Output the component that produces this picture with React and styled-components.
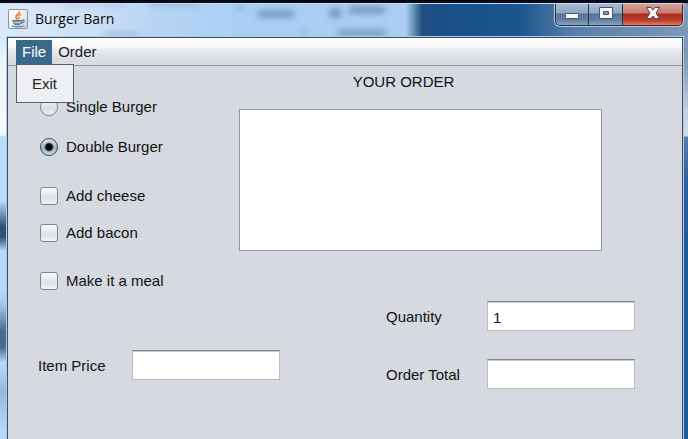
import React, { useState } from "react";
import styled, { createGlobalStyle, css } from "styled-components";

const GlobalStyle = createGlobalStyle`
  *, *::before, *::after { box-sizing: border-box; }
  body {
    margin: 0;
    background: #0b0d1c;
    font-family: "Liberation Sans", Arial, sans-serif;
    font-size: 15px;
    line-height: 20px;
    color: #111;
  }
  button, input, textarea { font: inherit; color: inherit; }
`;

const Frame = styled.div`
  position: relative;
  display: flex;
  flex-direction: column;
  min-height: 100vh;
  padding: 2px 5px 0 7px;
  border-top: 1px solid #05060f;
  background:
    linear-gradient(#0b0d1c, #0b0d1c) 0 0 / 100% 2px no-repeat,
    linear-gradient(180deg, #d3e7fa 0 34px, #eef6fd 60px, #f4f9fe 134px, #b9dcfb 136px 200px, #2b5378 225px 236px, #b5d9fa 250px 290px, #9dc4e6 305px, #476c91 330px 346px, #b3dafb 362px, #94b8dc 390px, #b3dafb 430px) 0 0 / 7px 100% no-repeat,
    linear-gradient(180deg, #7791b1 0, #819bb9 60px, #c3cedd 110px, #d3dce9 135px, #5a7ca8 136px, #2c629f 180px, #1b5a9c 260px) 100% 0 / 5px 100% no-repeat,
    #1b568f;
`;

const TitleBar = styled.header`
  position: relative;
  display: flex;
  align-items: flex-start;
  height: 34px;
  margin: 0 -5px 0 -7px;
  padding: 0 4px 0 8px;
  border-top: 1px solid #c9dbef;
  border-top-left-radius: 7px;
  border-top-right-radius: 7px;
  overflow: hidden;
  background: linear-gradient(90deg, #dce9f8 0, #cfe1f6 90px, #b8d5f3 150px, #a9cff4 240px, #abcef2 406px, #7ba5cb 411px, #22507d 422px, #194f88 438px, #1b568f 520px, #5a80aa 575px, #7591b3 660px, #7e98b7 100%);
`;

const Reflections = styled.svg`
  position: absolute;
  left: 0;
  top: 0;
  width: 430px;
  height: 34px;
  pointer-events: none;
`;

const Title = styled.h1`
  position: relative;
  flex: 1;
  margin: 5px 0 0 7px;
  font: 400 14px/20px "Open Sans", "Noto Sans", sans-serif;
  color: #080b12;
`;

const AppIcon = styled.svg`
  position: relative;
  width: 20px;
  height: 20px;
  margin-top: 5px;
`;

const WindowButtons = styled.div`
  position: relative;
  display: flex;
  margin-top: -2px;
  border: 1px solid #b4c6db;
  border-top: 0;
  border-radius: 0 0 6px 6px;
  overflow: hidden;
`;

const WindowButton = styled.button`
  display: grid;
  place-items: center;
  width: ${(p) => (p.$close ? 60 : 34)}px;
  height: 24px;
  padding: 0;
  border: 1px solid #22364f;
  border-top-color: #b9c8d9;
  border-left-width: ${(p) => (p.$first ? 1 : 0)}px;
  ${(p) =>
    p.$close
      ? css`
          border-color: #4a1e20;
          border-radius: 0 0 5px 0;
          background: linear-gradient(#d9a39b 0, #c67c70 10px, #ae2c1c 11px, #b83c28 17px, #dc8069 100%);
        `
      : css`
          border-radius: ${p.$first ? "0 0 0 5px" : "0"};
          background: linear-gradient(#a9bdd3 0, #8ea8c4 10px, #53749a 11px, #6481a5 17px, #87a3c1 100%);
        `}
`;

const Client = styled.main`
  position: relative;
  display: flex;
  flex: 1;
  flex-direction: column;
  border: 1px solid #354d68;
  border-bottom: 0;
  outline: 1px solid #b4cbe3;
  background: #d6d9e0;
`;

const MenuBar = styled.nav`
  display: flex;
  height: 28px;
  padding: 2px 8px;
  border-bottom: 1px solid #9297a1;
  background: linear-gradient(#fff 0, #f8f8fa 8px, #e6e8eb 13px, #d6d9de 24px, #dcdfe4 100%);
`;

const MenuGroup = styled.div`
  position: relative;
`;

const MenuButton = styled.button`
  height: 24px;
  padding: 0 6px;
  border: 0;
  background: ${(p) => (p.$open ? "#39698a" : "transparent")};
  color: ${(p) => (p.$open ? "#fff" : "#202020")};
`;

const MenuPopup = styled.div`
  position: absolute;
  z-index: 2;
  top: 24px;
  left: 0;
  padding: 6px 0;
  border: 1px solid #5a5d63;
  background: #edeff2;
`;

const MenuItem = styled.button`
  display: block;
  height: 25px;
  padding: 0 16px 0 15px;
  border: 0;
  background: transparent;
  color: #222;
`;

const Form = styled.form`
  display: grid;
  grid-template-columns: 272px 1fr;
  padding: 6px 47px 24px 30px;
`;

const OptionColumn = styled.div`
  display: flex;
  flex-direction: column;
  padding-top: 25px;
`;

const OptionGroup = styled.fieldset`
  display: flex;
  flex-direction: column;
  gap: ${(p) => p.$gap}px;
  margin: 0 0 ${(p) => p.$after}px;
  padding: 0 0 0 2px;
  border: 0;
`;

const Option = styled.label`
  display: flex;
  align-items: center;
  gap: 8px;
  height: 20px;
`;

const mark = css`
  appearance: none;
  width: 18px;
  height: 18px;
  margin: 0;
  border: 1px solid #7f8591;
`;

const RadioMark = styled.input.attrs({ type: "radio" })`
  ${mark}
  border-radius: 50%;
  background: linear-gradient(#fafafb, #d9dce1 60%, #f0f1f3);
  &:checked {
    border-color: #36495f;
    background:
      radial-gradient(circle, #08090c 0 3px, transparent 5px),
      linear-gradient(#dbe6f0, #9db4ca 55%, #c6d7e5);
  }
`;

const CheckMark = styled.input.attrs({ type: "checkbox" })`
  ${mark}
  border-radius: 3px;
  background: linear-gradient(#fafafb, #dee0e4 60%, #f1f2f4);
  &:checked {
    border-color: #36495f;
    background: linear-gradient(#dbe6f0, #8fa9c1 55%, #c6d7e5);
  }
`;

const OrderColumn = styled.div`
  display: flex;
  flex-direction: column;
`;

const OrderPanel = styled.section`
  display: flex;
  flex-direction: column;
  gap: 17px;
  margin: 0 33px 50px -71px;
`;

const OrderLabel = styled.label`
  padding-right: 34px;
  text-align: center;
`;

const OrderList = styled.textarea`
  height: 142px;
  padding: 4px;
  border: 1px solid #9297a1;
  outline: 0;
  background: #fff;
  resize: none;
`;

const Totals = styled.div`
  display: flex;
  flex-direction: column;
  align-items: flex-end;
  gap: 28px;
`;

const Field = styled.div`
  display: flex;
  align-items: center;
`;

const FieldLabel = styled.label`
  width: ${(p) => p.$width}px;
  padding-top: 2px;
`;

const FieldInput = styled.input`
  width: 148px;
  height: 30px;
  padding: 2px 5px 0;
  border: 1px solid #b9bbbf;
  border-top-color: #85878d;
  outline: 0;
  background: #fff;
  box-shadow: inset 0 1px 0 #c6c8cc;
`;

function JavaIcon() {
  return (
    <AppIcon viewBox="0 0 20 20" aria-hidden="true">
      <defs>
        <linearGradient id="tile" x1="0" y1="0" x2="1" y2="1">
          <stop offset="0" stopColor="#fff" />
          <stop offset="0.6" stopColor="#e9edf1" />
          <stop offset="1" stopColor="#b8c2cd" />
        </linearGradient>
      </defs>
      <rect x="0.5" y="0.5" width="19" height="19" rx="1.5" fill="url(#tile)" stroke="#8695a6" />
      <g fill="none" strokeLinecap="round">
        <path d="M11.5 3c.6 2.2-4.2 2.8-3.600 5 .2.9 1.200 1.200 1.300 2.200" stroke="#e87524" strokeWidth="1.600" />
        <path d="M12.800 5.600c-2.500 1-2.700 1.800-1.800 2.700.5.6.2 1.100-.4 1.600" stroke="#ee8b3c" strokeWidth="1.300" />
        <path d="M5 11.500h8.500c-.1 2-.9 3.400-2 4.200H7c-1.200-.8-1.900-2.200-2-4.200z" fill="#7893a8" stroke="#547793" />
        <path d="M6 13.400h6.500" stroke="#d4dfe7" strokeWidth="0.800" />
        <path d="M14 11.300c2.800-.7 3 2.200-.6 2.700" stroke="#547793" strokeWidth="1.300" />
        <path d="M4 17.100c3 .7 8.500.7 11.200 0" stroke="#6a8aa3" strokeWidth="1.200" />
      </g>
    </AppIcon>
  );
}

function GlassReflections() {
  return (
    <Reflections viewBox="0 0 430 34" aria-hidden="true">
      <defs>
        <filter id="soft" x="-50%" y="-100%" width="200%" height="300%">
          <feGaussianBlur stdDeviation="3" />
        </filter>
      </defs>
      <g filter="url(#soft)" fill="#557ba6">
        <rect x="104" y="28" width="34" height="6" opacity="0.3" />
        <rect x="64" y="-4" width="60" height="6" opacity="0.2" />
        <rect x="150" y="-4" width="50" height="6" opacity="0.3" />
        <rect x="258" y="6" width="36" height="8" opacity="0.6" />
        <rect x="330" y="4" width="11" height="10" opacity="0.65" />
        <rect x="349" y="2" width="36" height="8" opacity="0.6" />
        <rect x="338" y="25" width="48" height="8" opacity="0.55" />
        <rect x="236" y="2" width="8" height="5" opacity="0.3" />
        <rect x="300" y="27" width="10" height="4" opacity="0.3" />
      </g>
    </Reflections>
  );
}

function MinimizeIcon() {
  return (
    <svg width="18" height="18" viewBox="0 0 18 18" aria-hidden="true">
      <rect x="2.5" y="8.5" width="13" height="5" rx="1" fill="#f8f8f8" stroke="#45566c" />
    </svg>
  );
}

function MaximizeIcon() {
  return (
    <svg width="18" height="18" viewBox="0 0 18 18" aria-hidden="true">
      <path
        d="M2.5 2.500h13v11h-13zM6.500 6.500v3h5v-3z"
        fill="#f8f8f8"
        fillRule="evenodd"
        stroke="#45566c"
        strokeLinejoin="round"
      />
    </svg>
  );
}

function CloseIcon() {
  return (
    <svg width="18" height="18" viewBox="0 0 18 18" aria-hidden="true">
      <path
        d="M2.500 2.500h4.500L9 5l2-2.500h4.500L12 8l3.500 5.500H11L9 11l-2 2.500H2.500L6 8z"
        fill="#f8f8f8"
        stroke="#58464d"
        strokeLinejoin="round"
      />
    </svg>
  );
}

export default function App() {
  const [fileOpen, setFileOpen] = useState(true);
  const [burger, setBurger] = useState("double");
  const [quantity, setQuantity] = useState("1");

  return (
    <>
      <GlobalStyle />
      <Frame>
        <TitleBar>
          <GlassReflections />
          <JavaIcon />
          <Title>Burger Barn</Title>
          <WindowButtons>
            <WindowButton $first aria-label="Minimize"><MinimizeIcon /></WindowButton>
            <WindowButton aria-label="Maximize"><MaximizeIcon /></WindowButton>
            <WindowButton $close aria-label="Close"><CloseIcon /></WindowButton>
          </WindowButtons>
        </TitleBar>
        <Client>
          <MenuBar>
            <MenuGroup>
              <MenuButton $open={fileOpen} aria-expanded={fileOpen} onClick={() => setFileOpen(!fileOpen)}>
                File
              </MenuButton>
              {fileOpen && (
                <MenuPopup>
                  <MenuItem onClick={() => setFileOpen(false)}>Exit</MenuItem>
                </MenuPopup>
              )}
            </MenuGroup>
            <MenuButton>Order</MenuButton>
          </MenuBar>
          <Form onSubmit={(e) => e.preventDefault()}>
            <OptionColumn>
              <OptionGroup $gap={20} $after={29} aria-label="Burger">
                <Option>
                  <RadioMark name="burger" checked={burger === "single"} onChange={() => setBurger("single")} />
                  Single Burger
                </Option>
                <Option>
                  <RadioMark name="burger" checked={burger === "double"} onChange={() => setBurger("double")} />
                  Double Burger
                </Option>
              </OptionGroup>
              <OptionGroup $gap={17} $after={28} aria-label="Extras">
                <Option><CheckMark />Add cheese</Option>
                <Option><CheckMark />Add bacon</Option>
              </OptionGroup>
              <OptionGroup $gap={0} $after={59} aria-label="Meal">
                <Option><CheckMark />Make it a meal</Option>
              </OptionGroup>
              <Field>
                <FieldLabel $width={94} htmlFor="price">Item Price</FieldLabel>
                <FieldInput id="price" />
              </Field>
            </OptionColumn>
            <OrderColumn>
              <OrderPanel>
                <OrderLabel htmlFor="order">YOUR ORDER</OrderLabel>
                <OrderList id="order" readOnly />
              </OrderPanel>
              <Totals>
                <Field>
                  <FieldLabel $width={101} htmlFor="quantity">Quantity</FieldLabel>
                  <FieldInput id="quantity" value={quantity} onChange={(e) => setQuantity(e.target.value)} />
                </Field>
                <Field>
                  <FieldLabel $width={101} htmlFor="total">Order Total</FieldLabel>
                  <FieldInput id="total" />
                </Field>
              </Totals>
            </OrderColumn>
          </Form>
        </Client>
      </Frame>
    </>
  );
}
